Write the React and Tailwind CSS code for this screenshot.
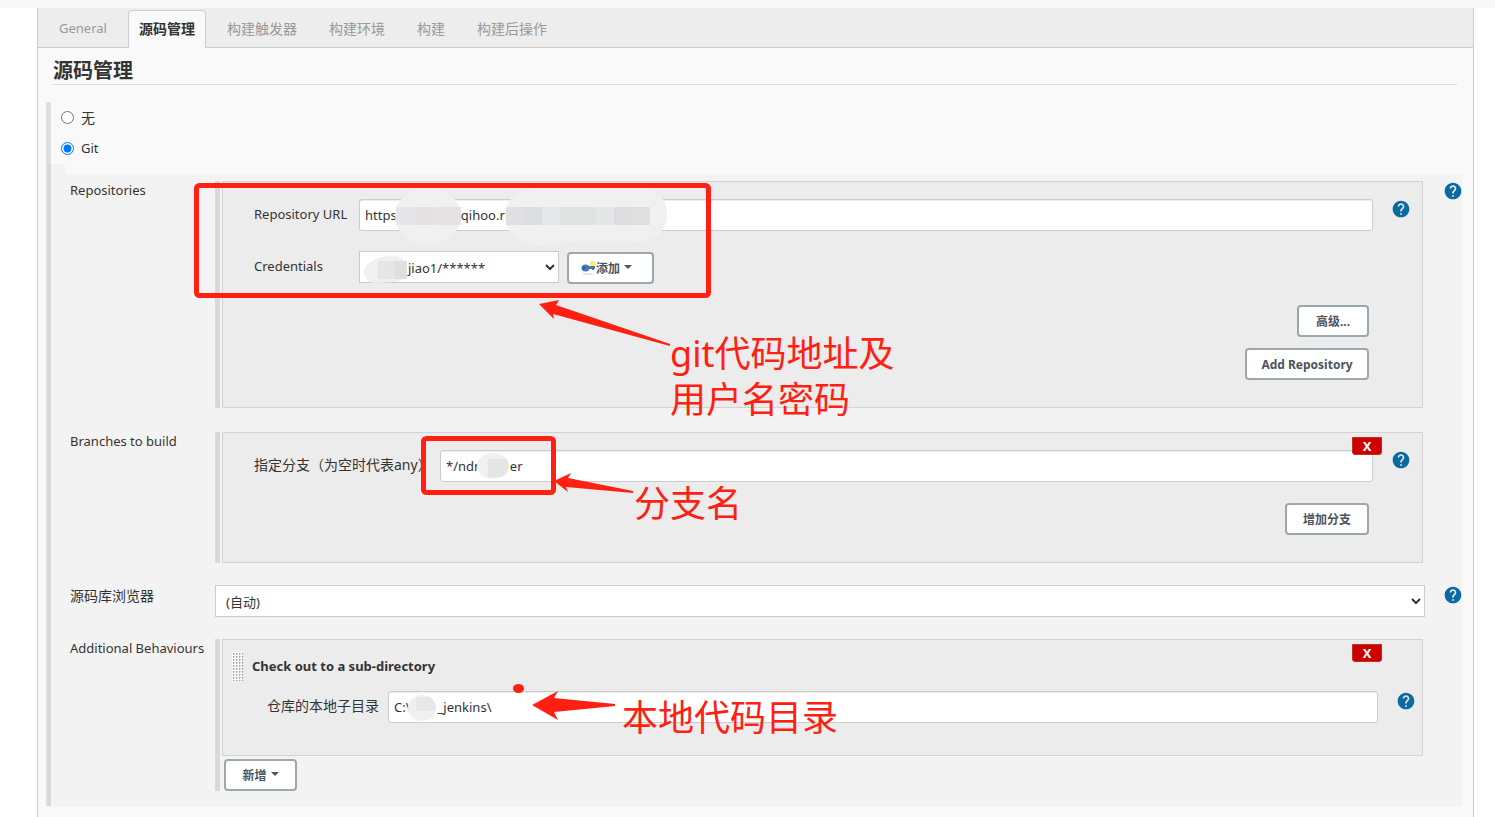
import React, { useState } from "react";
import { MdHelp } from "react-icons/md";

const tabs = ["General", "源码管理", "构建触发器", "构建环境", "构建", "构建后操作"];

const inputClass =
  "h-8 w-full rounded-[3px] border border-[#ccc] bg-white px-[5px] text-[13px] text-[#333] shadow-[inset_0_1px_1px_rgba(0,0,0,0.075)] focus:outline-none";

function Help({ label, className = "" }) {
  return (
    <button type="button" aria-label={label} className={`block h-5 w-5 shrink-0 text-[#0b6aa2] ${className}`}>
      <MdHelp size={20} />
    </button>
  );
}

function Button({ children, className = "" }) {
  return (
    <button
      type="button"
      className={`flex h-8 shrink-0 items-center justify-center rounded-[4px] border-2 border-[#9aa7af] bg-white pt-0.5 text-xs font-bold whitespace-nowrap text-[#4d545d] ${className}`}
    >
      {children}
    </button>
  );
}

function Caret() {
  return (
    <svg width="8" height="4" viewBox="0 0 8 4" className="mb-1 ml-1 fill-[#4d545d]">
      <path d="M0 0h8L4 4z" />
    </svg>
  );
}

function DeleteButton() {
  return (
    <button
      type="button"
      className="absolute top-1 right-10 h-[18px] w-[30px] rounded-b-[3px] border border-[#c03020] bg-[#c00] text-[13px] leading-4 font-bold text-white"
    >
      X
    </button>
  );
}

function KeyIcon() {
  return (
    <svg width="15" height="16" viewBox="0 0 15 16" className="mb-0.5 shrink-0">
      <ellipse cx="7" cy="14" rx="6" ry="1" fill="#e4e4e4" />
      <path d="M7 6h7v3h-1v1h-2V9H7z" fill="#4a78b5" />
      <ellipse cx="4.500" cy="8" rx="4" ry="3.500" fill="#4a78b5" />
      <ellipse cx="3" cy="8" rx="1" ry="1.500" fill="#2f578f" />
      <circle cx="11.500" cy="3.500" r="2.500" fill="#ffe93b" />
      <circle cx="11.500" cy="3.500" r="1" fill="#fffbc0" />
    </svg>
  );
}

function Row({ label, help, htmlFor, children, className = "", labelClass = "text-[13px] leading-[18px]" }) {
  return (
    <div className={`grid grid-cols-[164px_minmax(0,1fr)_37px] ${className}`}>
      <label htmlFor={htmlFor} className={`pl-[19px] ${labelClass}`}>
        {label}
      </label>
      <div>{children}</div>
      <div className="flex justify-end">{help && <Help label={`帮助: ${label}`} className="-mr-px" />}</div>
    </div>
  );
}

function Panel({ className = "", children }) {
  return <div className={`relative mr-0.5 border border-[#d3d3d3] bg-[#ececec] ${className}`}>{children}</div>;
}

function Annotations() {
  return (
    <div className="pointer-events-none absolute inset-0 overflow-hidden">
      <svg width="960" height="817" viewBox="0 0 960 817" className="absolute top-0 left-0 max-w-none">
        <defs>
          <clipPath id="branch-spot">
            <ellipse cx="493" cy="466" rx="16" ry="13" />
          </clipPath>
          <clipPath id="dir-spot">
            <ellipse cx="422" cy="708" rx="14" ry="13" />
          </clipPath>
        </defs>
        {/* censored parts of the fields */}
        <g fill="#f0f0f0">
          <ellipse cx="428" cy="216" rx="33" ry="29" />
          <path d="M505 216C505 200 517 190 540 188L630 186C655 186 667 198 667 213C667 230 657 242 636 242L580 241C560 243 552 246 538 246C518 244 505 232 505 216Z" />
          <path d="M364 271C366 262 378 256 394 256C402 256 407 262 407 269C407 277 403 281 394 282L374 283C368 282 364 277 364 271Z" />
          <ellipse cx="493" cy="466" rx="16" ry="13" />
          <ellipse cx="422" cy="708" rx="14" ry="13" />
        </g>
        <path d="M396 207h20v18h-20z" fill="#e6e6e8" />
        <path d="M416 207h18v18h-18z" fill="#e3e1e2" />
        <path d="M434 207h27v18h-27z" fill="#e4e2e3" />
        <path d="M506 207h18v18h-18z" fill="#e0e0e3" />
        <path d="M524 207h18v18h-18z" fill="#dcdee2" />
        <path d="M542 207h18v18h-18z" fill="#e5e7e8" />
        <path d="M560 207h36v18h-36z" fill="#e0e2e2" />
        <path d="M596 207h18v18h-18z" fill="#e5e6e7" />
        <path d="M614 207h18v18h-18z" fill="#dddcde" />
        <path d="M632 207h18v18h-18z" fill="#e0dedf" />
        <path d="M378 261h17v18h-17z" fill="#e6e6e8" />
        <path d="M395 261h12v18h-12z" fill="#dfdfe1" />
        <path d="M488 459h20v18h-20z" fill="#e4e6e6" clipPath="url(#branch-spot)" />
        <path d="M416 697h20v14h-20z" fill="#e6e8e8" clipPath="url(#dir-spot)" />
        <g fill="none" stroke="#ff2012" strokeWidth="5">
          <rect x="196.500" y="185.500" width="512" height="110" rx="3" />
          <rect x="423.500" y="438.500" width="130" height="54" rx="3" />
        </g>
        <g fill="#ff2012">
          <path d="M539 304L559 300L556 305L670 344L670 346L553 314L554 319Z" />
          <path d="M554 481L571 473L568 478L633 491L633 493L566 487L568 492Z" />
          <path d="M532 705L558 691L554 698L615 704L615 706L554 712L558 720Z" />
          <ellipse cx="518.500" cy="688.500" rx="5.500" ry="4.500" />
        </g>
      </svg>
      <div className="absolute top-[331px] left-[670px] text-[36px] leading-[46px] text-[#ff2012]">
        git代码地址及
        <br />
        用户名密码
      </div>
      <div className="absolute top-[481px] left-[634px] text-[36px] leading-[46px] text-[#ff2012]">分支名</div>
      <div className="absolute top-[695px] left-[622px] text-[36px] leading-[46px] text-[#ff2012]">本地代码目录</div>
    </div>
  );
}

function App() {
  const [scm, setScm] = useState("git");
  const [url, setUrl] = useState("https                   qihoo.r");
  const [branch, setBranch] = useState("*/ndr         er");
  const [subDir, setSubDir] = useState("C:\\        _jenkins\\");

  return (
    <div className="relative min-h-screen bg-white font-['Noto_Sans','Noto_Sans_CJK_SC',sans-serif] text-sm text-[#333]">
      <div className="h-2 bg-[#f8f8f8]" />
      <main className="mr-[21px] ml-[37px] border-x border-[#ccc] bg-[#f9f9f9] pb-[11px]">
        <nav className="flex h-10 gap-2.5 border-b border-[#ccc] bg-[#ededed] pt-0.5 pl-2.5">
          {tabs.map((tab) => (
            <button
              key={tab}
              type="button"
              className={
                tab === "源码管理"
                  ? "-mb-px rounded-t-[4px] border border-b-0 border-[#ccc] bg-[#f9f9f9] px-2.5 pb-0.5 font-bold text-[#333]"
                  : "border border-transparent px-2.5 text-[#999] first:text-[13px]"
              }
            >
              {tab}
            </button>
          ))}
        </nav>

        <h1 className="mr-4 ml-[15px] border-b border-[#ddd] pt-[11px] pb-px text-xl leading-6 font-bold">源码管理</h1>

        <div className="mt-[17px] mr-[11px] ml-2 border-l-[5px] border-[#dedede]">
          <label className="flex h-[31px] items-center gap-[7px] pl-2.5">
            <input type="radio" name="scm" checked={scm === "none"} onChange={() => setScm("none")} className="h-[13px] w-[13px]" />
            无
          </label>
          <label className="flex h-[31px] items-center gap-[7px] pl-2.5 text-[13px]">
            <input type="radio" name="scm" checked={scm === "git"} onChange={() => setScm("git")} className="h-[13px] w-[13px]" />
            Git
          </label>

          <div className="-ml-[3px] border-l-[3px] border-[#d8d8d8]">
            <div className="h-2.5 w-3.5 bg-[#f3f3f3]" />
            <div className="bg-[#f3f3f3] pt-[7px] pb-[15px]">
              <Row label="Repositories" help>
                <div className="border-l-[5px] border-[#d8d8d8] pl-0.5">
                  <Panel className="pt-[17px] pb-[27px]">
                    <div className="flex pr-[11px] pl-[31px]">
                      <label htmlFor="url" className="w-[105px] shrink-0 pt-1.5 text-[13px] leading-[18px]">
                        Repository URL
                      </label>
                      <input id="url" value={url} onChange={(e) => setUrl(e.target.value)} className={inputClass} />
                      <Help label="帮助: Repository URL" className="ml-[18px]" />
                    </div>
                    <div className="mt-5 flex pl-[31px]">
                      <label htmlFor="credentials" className="w-[105px] shrink-0 pt-1.5 text-[13px] leading-[18px]">
                        Credentials
                      </label>
                      <select id="credentials" className="h-8 w-[200px] border border-[#ccc] bg-white pt-0.5 text-[13px]">
                        <option>{"\u00a0".repeat(13)}jiao1/******</option>
                      </select>
                      <Button className="mt-px ml-2 w-[87px] pr-2">
                        <KeyIcon />
                        添加
                        <Caret />
                      </Button>
                    </div>
                    <div className="mt-[21px] mr-[53px] flex flex-col items-end gap-[11px]">
                      <Button className="w-[72px]">高级...</Button>
                      <Button className="w-[124px]">Add Repository</Button>
                    </div>
                  </Panel>
                </div>
              </Row>

              <Row label="Branches to build" className="mt-6">
                <div className="border-l-[5px] border-[#d8d8d8] pl-0.5">
                  <Panel className="pt-[17px] pb-[27px]">
                    <div className="flex pr-[11px] pl-[31px]">
                      <label htmlFor="branch" className="w-[186px] shrink-0 pt-1.5 leading-[18px] whitespace-nowrap">
                        指定分支（为空时代表any）
                      </label>
                      <input id="branch" value={branch} onChange={(e) => setBranch(e.target.value)} className={inputClass} />
                      <Help label="帮助: 指定分支" className="ml-[18px]" />
                    </div>
                    <DeleteButton />
                    <div className="mt-[21px] mr-[53px] flex justify-end">
                      <Button className="w-[84px]">增加分支</Button>
                    </div>
                  </Panel>
                </div>
              </Row>

              <Row label="源码库浏览器" htmlFor="browser" help className="mt-[22px]" labelClass="leading-[22px]">
                <select id="browser" className="block h-8 w-full border border-[#ccc] bg-white pt-0.5 pl-1.5 text-[13px]">
                  <option>(自动)</option>
                </select>
              </Row>

              <Row label="Additional Behaviours" className="mt-[22px]">
                <div className="border-l-[5px] border-[#d8d8d8] pl-0.5">
                  <Panel className="pt-3 pb-8">
                    <div className="flex items-center gap-2 pl-[9px]">
                      <svg width="12" height="29" className="shrink-0 cursor-move">
                        <defs>
                          <pattern id="grip" width="3" height="3" patternUnits="userSpaceOnUse">
                            <rect width="3" height="3" fill="#f8f8f8" />
                            <rect x="1" y="1" width="1" height="2" fill="#aaa" />
                            <rect x="2" y="1" width="1" height="1" fill="#ccc" />
                          </pattern>
                        </defs>
                        <rect width="12" height="29" fill="url(#grip)" />
                      </svg>
                      <b className="text-[13px]">Check out to a sub-directory</b>
                    </div>
                    <DeleteButton />
                    <div className="mt-2.5 flex pr-1.5 pl-11">
                      <label htmlFor="subdir" className="w-[121px] shrink-0 pt-1.5 leading-[18px]">
                        仓库的本地子目录
                      </label>
                      <input id="subdir" value={subDir} onChange={(e) => setSubDir(e.target.value)} className={inputClass} />
                      <Help label="帮助: 仓库的本地子目录" className="ml-[18px]" />
                    </div>
                  </Panel>
                  <Button className="mt-[3px] ml-0.5 w-[73px]">
                    新增
                    <Caret />
                  </Button>
                </div>
              </Row>
            </div>
          </div>
        </div>
      </main>
      <Annotations />
    </div>
  );
}

export default App;
